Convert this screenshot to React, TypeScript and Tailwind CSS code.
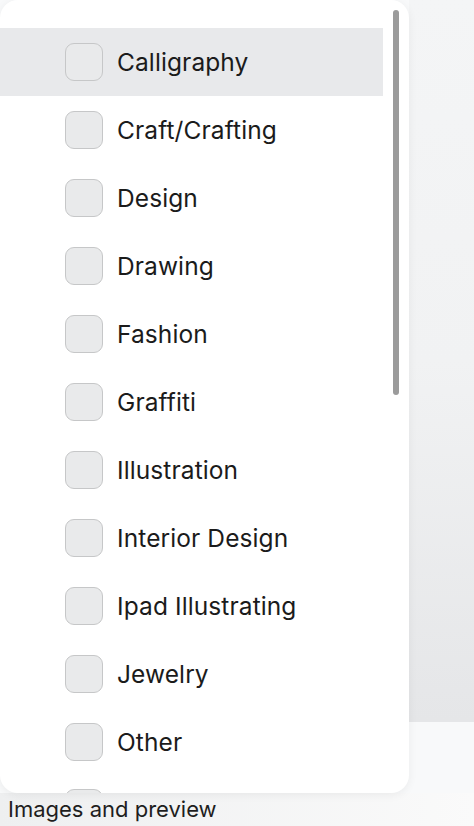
const items = [
  "Calligraphy",
  "Craft/Crafting",
  "Design",
  "Drawing",
  "Fashion",
  "Graffiti",
  "Illustration",
  "Interior Design",
  "Ipad Illustrating",
  "Jewelry",
  "Other",
];

export default function App() {
  return (
    <div className="w-[474px] h-[826px] overflow-hidden flex flex-col bg-[#f8f9fa] font-['Inter',sans-serif] text-[#1b1b1b]">
      <div className="flex h-[793px]">
        {/* dropdown panel */}
        <div className="relative w-[409px] h-[793px] shrink-0 bg-white rounded-[18px] overflow-hidden shadow-[0_2px_10px_rgba(0,0,0,0.06)] z-10">
          <ul className="pt-[28px]">
            {items.map((label, i) => (
              <li
                key={label}
                className={`flex items-center h-[68px] w-[383px] pl-[65px] gap-[14px] ${i === 0 ? "bg-[#e8e9eb]" : ""}`}
              >
                <span className="w-[38px] h-[38px] rounded-[9px] border-[1.5px] border-[#c6c7c8] bg-[#e9eaeb] shrink-0" />
                <span className="text-[24.5px] font-normal tracking-[0.1px]">{label}</span>
              </li>
            ))}
            {/* next option, scrolled below the fold */}
            <li className="flex items-start h-[68px] pl-[65px] pt-[13px]">
              <span className="w-[38px] h-[38px] rounded-[9px] border-[1.5px] border-[#c6c7c8] bg-[#e9eaeb] shrink-0" />
            </li>
          </ul>
          <div className="absolute top-[10px] right-[10px] w-[6px] h-[385px] rounded-full bg-[#9b9b9b]" />
        </div>
        {/* page behind */}
        <div className="flex-1 flex flex-col">
          <div className="h-[722px] bg-gradient-to-b from-[#f4f5f6] via-[#f1f2f3] to-[#e5e6e8]" />
          <div className="flex-1 bg-[#f8f9fa]" />
        </div>
      </div>
      <div className="flex-1 bg-gradient-to-r from-[#eeeff0] to-[#fafafa] pl-[8px]">
        <span className="text-[22px] leading-[32px] text-[#1e1e1e]">Images and preview</span>
      </div>
    </div>
  );
}
